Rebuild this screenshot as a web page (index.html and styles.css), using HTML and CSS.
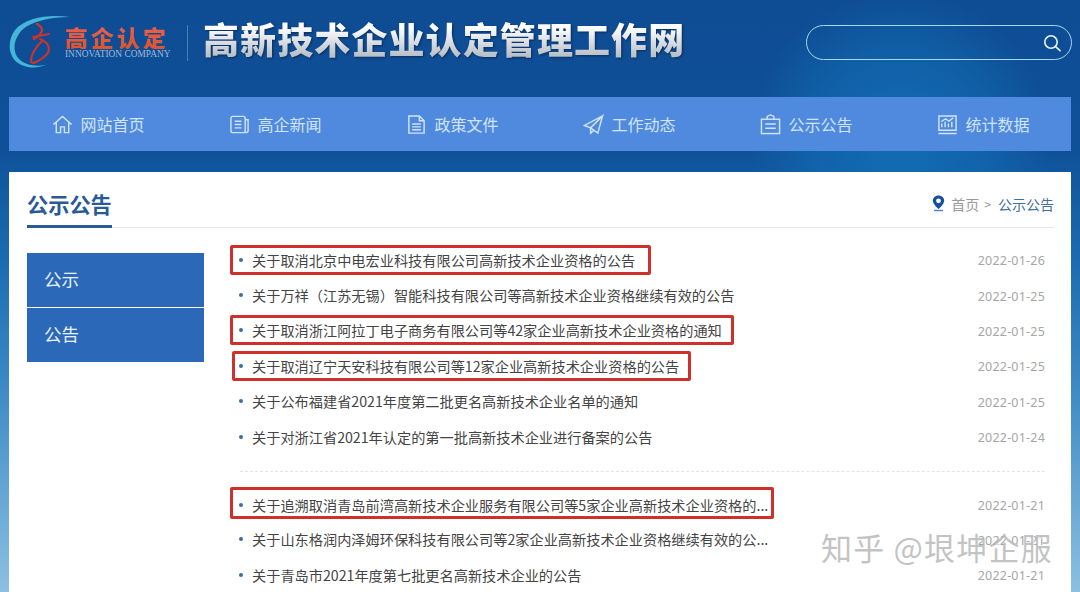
FILE: index.html
```html
<!DOCTYPE html>
<html lang="zh">
<head>
  <meta charset="UTF-8" />
  <title>公示公告 - 高新技术企业认定管理工作网</title>
  <link rel="stylesheet" href="styles.css">
</head>
<body>
  <div class="page">
    <header class="top">
      <div class="logo">
        <svg class="logo-mark" width="64" height="56" viewBox="0 0 64 56">
          <path d="M64 2C44 -1 20 2 9 15C1 26 2 41 12 48C19 53 30 54 40 50C29 52 18 50 12 43C6 35 8 24 16 15C26 6 44 2 64 2Z" fill="#45b6da"/>
          <g fill="none" stroke="#c8342f" stroke-linecap="round">
            <path d="M31 9C38 13 38 18 28 24" stroke-width="2.4"/>
            <path d="M27 22L43 19" stroke-width="1.8"/>
            <path d="M34 24C44 28 46 36 38 42C32 47 25 50 25 46C25 40 30 32 36 26" stroke-width="2.2"/>
          </g>
        </svg>
        <div class="logo-text">
          <div class="logo-cn">高企认定</div>
          <div class="logo-en">INNOVATION COMPANY</div>
        </div>
      </div>
      <h1 class="site-name">高新技术企业认定管理工作网</h1>
      <div class="search">
        <svg width="18" height="18" viewBox="0 0 18 18" fill="none" stroke="#e6f4fb" stroke-width="1.6">
          <circle cx="8" cy="8" r="6.2"/>
          <path d="M12.6 12.6L17 16.6" stroke-linecap="round"/>
        </svg>
      </div>
    </header>

    <nav class="nav">
      <a class="nav-item">
        <svg class="nav-icon" viewBox="0 0 22 22"><path d="M1.5 11L11 2.5L20.5 11M4.5 9V19.5H9V13.5H13V19.5H17.5V9"/></svg>
        网站首页
      </a>
      <a class="nav-item">
        <svg class="nav-icon" viewBox="0 0 22 22"><rect x="2" y="2.5" width="15" height="17" rx="2"/><path d="M17 6H20V17.5C20 18.8 19 19.5 17 19.5M6 7.5H13M6 11H13M6 14.5H13"/></svg>
        高企新闻
      </a>
      <a class="nav-item">
        <svg class="nav-icon" viewBox="0 0 22 22"><path d="M3 2H14L19 7V20H3ZM14 2V7H19M6.5 10.5H15.5M6.5 13.5H15.5M6.5 16.5H15.5"/></svg>
        政策文件
      </a>
      <a class="nav-item">
        <svg class="nav-icon" viewBox="0 0 22 22"><path d="M20.5 2L1.5 12L8 14.5L20.5 2L15.5 20L8 14.5V20L11.5 17"/></svg>
        工作动态
      </a>
      <a class="nav-item">
        <svg class="nav-icon" viewBox="0 0 22 22"><rect x="1.5" y="5.5" width="19" height="15"/><path d="M7.5 5.5V2.5L11 1L14.5 2.5V5.5M5.5 10.5H16.5M5.5 15H16.5"/></svg>
        公示公告
      </a>
      <a class="nav-item">
        <svg class="nav-icon" viewBox="0 0 22 22"><path d="M2 2H20V17H2ZM1.5 20.5H20.5M5 14V10M8.5 14V8M12 14V10M15.5 14V8M4.5 8L9 5L12.5 7.5L17 4"/></svg>
        统计数据
      </a>
    </nav>

    <main class="card">
      <div class="card-head">
        <h2 class="card-title">公示公告</h2>
        <div class="crumb">
          <svg width="13" height="17" viewBox="0 0 13 17">
            <path d="M6.5 0.5C3 0.5 0.8 3 0.8 5.8C0.8 9.2 6.5 14 6.5 14C6.5 14 12.2 9.2 12.2 5.8C12.2 3 10 0.5 6.5 0.5Z" fill="#14509e"/>
            <circle cx="6.5" cy="5.8" r="2.4" fill="#fff"/>
            <path d="M2 15.5H11" stroke="#4f8bc9" stroke-width="1.5"/>
          </svg>
          <span class="crumb-home">首页</span>
          <span class="crumb-sep">&gt;</span>
          <span class="crumb-now">公示公告</span>
        </div>
      </div>

      <div class="card-body">
        <aside class="side">
          <a class="side-item">公示</a>
          <a class="side-item">公告</a>
        </aside>

        <div class="lists">
          <ul class="news">
            <li><span class="news-title mark">关于取消北京中电宏业科技有限公司高新技术企业资格的公告</span><time>2022-01-26</time></li>
            <li><span class="news-title">关于万祥（江苏无锡）智能科技有限公司等高新技术企业资格继续有效的公告</span><time>2022-01-25</time></li>
            <li><span class="news-title mark mark-mid">关于取消浙江阿拉丁电子商务有限公司等42家企业高新技术企业资格的通知</span><time>2022-01-25</time></li>
            <li><span class="news-title mark mark-mid mark-in">关于取消辽宁天安科技有限公司等12家企业高新技术企业资格的公告</span><time>2022-01-25</time></li>
            <li><span class="news-title">关于公布福建省2021年度第二批更名高新技术企业名单的通知</span><time>2022-01-25</time></li>
            <li><span class="news-title">关于对浙江省2021年认定的第一批高新技术企业进行备案的公告</span><time>2022-01-24</time></li>
          </ul>
          <div class="news-sep"></div>
          <ul class="news">
            <li><span class="news-title mark mark-tall">关于追溯取消青岛前湾高新技术企业服务有限公司等5家企业高新技术企业资格的...</span><time>2022-01-21</time></li>
            <li><span class="news-title">关于山东格润内泽姆环保科技有限公司等2家企业高新技术企业资格继续有效的公...</span><time>2022-01-21</time></li>
            <li><span class="news-title">关于青岛市2021年度第七批更名高新技术企业的公告</span><time>2022-01-21</time></li>
          </ul>
        </div>
      </div>
    </main>

    <div class="watermark">知乎 @垠坤企服</div>
  </div>
</body>
</html>
```

FILE: styles.css
```css
* {
  box-sizing: border-box;
}

body {
  margin: 0;
  font-family: "Noto Sans CJK SC", "Noto Sans", sans-serif;
}

.page {
  position: relative;
  height: 592px;
  overflow: hidden;
  padding: 0 9px;
  background:
    radial-gradient(circle at 900px 140px, rgba(18, 118, 188, 0.75) 0, rgba(18, 112, 182, 0.5) 90px, rgba(20, 90, 160, 0) 150px),
    linear-gradient(180deg, #0e4c93 0, #0f5199 150px, #1a6cb2 260px, #3a88c4 380px, #8cc0e2 592px);
}

.top {
  display: flex;
  align-items: center;
  height: 97px;
}

.logo {
  display: flex;
  align-items: center;
  position: relative;
  height: 60px;
  margin: -12px 0 0 -3px;
  padding-right: 17px;
}

.logo::after {
  content: "";
  position: absolute;
  right: 0;
  top: 12px;
  height: 36px;
  border-right: 1px solid #4a7fb6;
}

.logo-mark {
  margin-right: -5px;
}

.logo-cn {
  width: 106px;
  font-size: 23px;
  line-height: 24px;
  font-weight: 900;
  letter-spacing: 3px;
  white-space: nowrap;
  background: linear-gradient(180deg, #ef5f4a, #d9552f);
  -webkit-background-clip: text;
  background-clip: text;
  color: transparent;
}

.logo-en {
  font-family: "Liberation Serif", serif;
  font-size: 9.4px;
  line-height: 11px;
  color: #9dbbdc;
  white-space: nowrap;
}

.site-name {
  margin: -21px 0 0 15px;
  font-size: 36px;
  line-height: 44px;
  font-weight: 900;
  letter-spacing: 1.1px;
  white-space: nowrap;
  background: linear-gradient(180deg, #ffffff 25%, #b9c0c9 90%);
  -webkit-background-clip: text;
  background-clip: text;
  color: transparent;
  filter: drop-shadow(1px 1px 1px rgba(6, 30, 70, 0.7));
}

.search {
  display: flex;
  align-items: center;
  justify-content: flex-end;
  width: 266px;
  height: 35px;
  margin: -12px -1px 0 auto;
  padding-right: 10px;
  border: 1.5px solid #a6d9f0;
  border-radius: 18px;
}

.nav {
  display: flex;
  height: 54px;
  background-color: #4f8ade;
}

.nav-item {
  flex: 1;
  display: flex;
  align-items: center;
  justify-content: center;
  gap: 7px;
  padding-left: 2px;
  font-size: 16px;
  color: #d2e4f7;
  white-space: nowrap;
}

.nav-icon {
  width: 21px;
  height: 21px;
  fill: none;
  stroke: #d2e4f7;
  stroke-width: 1.5;
}

.card {
  height: 420px;
  margin-top: 21px;
  padding: 0 17px 0 18px;
  background-color: #fff;
}

.card-head {
  display: flex;
  justify-content: space-between;
  align-items: center;
  height: 56px;
  border-bottom: 1px solid #e6e6e6;
}

.card-title {
  height: 56px;
  margin: 0 0 -1px;
  line-height: 64px;
  font-size: 21.2px;
  font-weight: 700;
  color: #2a5a96;
  border-bottom: 3px solid #2a5a96;
}

.crumb {
  display: flex;
  align-items: center;
  margin-top: 8px;
  font-size: 14px;
  color: #999;
}

.crumb svg {
  margin-right: 6px;
}

.crumb-sep {
  margin: 0 7px 0 5px;
  font-size: 12px;
}

.crumb-now {
  color: #3f6f9f;
}

.card-body {
  display: flex;
}

.side {
  width: 177px;
  flex-shrink: 0;
  margin-top: 25px;
}

.side-item {
  display: block;
  height: 54px;
  margin-bottom: 1px;
  padding-left: 17px;
  line-height: 52px;
  font-size: 17.5px;
  color: #e8f2fc;
  background-color: #2b68b8;
}

.lists {
  flex: 1;
  min-width: 0;
  margin: 15px 0 0 26px;
  padding-right: 9px;
}

.news {
  margin: 0;
  padding: 0;
  list-style: none;
}

.news li {
  display: flex;
  justify-content: space-between;
  align-items: center;
  height: 35.4px;
}

.news time {
  font-family: "Noto Sans", sans-serif;
  font-size: 12.5px;
  letter-spacing: 0.2px;
  color: #a6a6a6;
}

.news-title {
  position: relative;
  display: block;
  height: 30px;
  margin-bottom: 2px;
  padding: 0 16px 0 22px;
  line-height: 30px;
  font-size: 14.2px;
  color: #444;
  white-space: nowrap;
}

.news-title::before {
  content: "";
  position: absolute;
  left: 9px;
  top: 13px;
  width: 4px;
  height: 4px;
  border-radius: 50%;
  background-color: #3a6ea8;
}

.mark {
  border: 3px solid #d0302c;
  border-radius: 2px;
  padding-left: 19px;
  padding-right: 13px;
  line-height: 24px;
}

.mark::before {
  left: 6px;
  top: 10px;
}

.mark-mid {
  padding-right: 9px;
}

.mark-in {
  margin-left: 2px;
  padding-left: 17px;
}

.mark-in::before {
  left: 4px;
}

.mark-tall {
  height: 32px;
  margin-bottom: 4px;
  padding-right: 3px;
  line-height: 30px;
}

.mark-tall::before {
  top: 13px;
}

.news-sep {
  margin: 16px 0 15px 10px;
  border-top: 1px dashed #e4e4e4;
}

.watermark {
  position: absolute;
  left: 821px;
  top: 526px;
  font-size: 31px;
  line-height: 42px;
  letter-spacing: 1.2px;
  color: rgba(175, 175, 175, 0.75);
  text-shadow: 1px 1px 0 rgba(255, 255, 255, 0.7);
  white-space: nowrap;
}
```
